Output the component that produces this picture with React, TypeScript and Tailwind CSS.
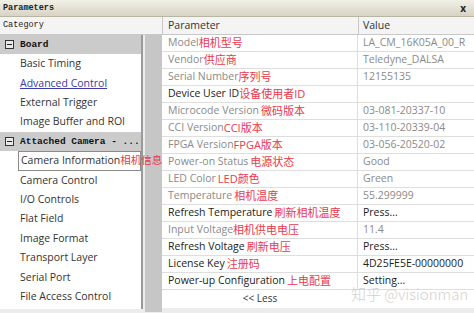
import React from "react";

const RED = "text-[#e8394d]";

type Row = { name: string; cn: string; value: string; ro: boolean; gap?: boolean };

const rows: Row[] = [
  { name: "Model", cn: "相机型号", value: "LA_CM_16K05A_00_R", ro: true },
  { name: "Vendor", cn: "供应商", value: "Teledyne_DALSA", ro: true },
  { name: "Serial Number", cn: "序列号", value: "12155135", ro: true },
  { name: "Device User ID", cn: "设备使用者ID", value: "", ro: false },
  { name: "Microcode Version", cn: "微码版本", value: "03-081-20337-10", ro: true, gap: true },
  { name: "CCI Version", cn: "CCI版本", value: "03-110-20339-04", ro: true },
  { name: "FPGA Version", cn: "FPGA版本", value: "03-056-20520-02", ro: true },
  { name: "Power-on Status", cn: "电源状态", value: "Good", ro: true, gap: true },
  { name: "LED Color", cn: "LED颜色", value: "Green", ro: true, gap: true },
  { name: "Temperature", cn: "相机温度", value: "55.299999", ro: true, gap: true },
  { name: "Refresh Temperature", cn: "刷新相机温度", value: "Press...", ro: false, gap: true },
  { name: "Input Voltage", cn: "相机供电电压", value: "11.4", ro: true },
  { name: "Refresh Voltage", cn: "刷新电压", value: "Press...", ro: false, gap: true },
  { name: "License Key", cn: "注册码", value: "4D25FE5E-00000000", ro: false, gap: true },
  { name: "Power-up Configuration", cn: "上电配置", value: "Setting...", ro: false, gap: true },
];

const boardItems = ["Basic Timing", "Advanced Control", "External Trigger", "Image Buffer and ROI"];
const camItems = [
  "Camera Control",
  "I/O Controls",
  "Flat Field",
  "Image Format",
  "Transport Layer",
  "Serial Port",
  "File Access Control",
];

const SANS = "font-['Open_Sans','Noto_Sans_CJK_SC',sans-serif]";
const MONO = "font-['Liberation_Mono',monospace]";

function MinusBox() {
  return (
    <span className="w-[9px] h-[9px] border border-[#333] flex items-center justify-center bg-[#e8e8e8] shrink-0">
      <span className="w-[5px] h-[1px] bg-[#222]" />
    </span>
  );
}

function Header({ label }: { label: string }) {
  return (
    <div className="h-[19.4px] bg-[#cbcbcb] flex items-center pl-[5px] gap-[6px]">
      <MinusBox />
      <span className={`${MONO} text-[9.5px] font-bold text-[#111] whitespace-pre`}>{label}</span>
    </div>
  );
}

function Item({ label, link }: { label: string; link?: boolean }) {
  return (
    <div
      className={`h-[19.4px] flex items-center pl-[20px] text-[10.5px] ${
        link ? "text-[#3a3aa8] underline" : "text-[#333]"
      }`}
    >
      {label}
    </div>
  );
}

export default function App() {
  return (
    <div className={`w-[474px] h-[313px] bg-[#ececec] relative overflow-hidden ${SANS}`}>
      {/* title bar */}
      <div className="h-[17px] flex items-center justify-between pl-[3px] pr-[8px] bg-gradient-to-b from-[#f2f0e6] to-[#d8d4c4] border-b border-[#b9b5a5]">
        <span className={`${MONO} text-[8.5px] font-bold text-[#222]`}>Parameters</span>
        <span className="text-[10px] font-bold text-[#222] leading-none">x</span>
      </div>
      {/* header row */}
      <div className="h-[18px] flex bg-[#f4f4f4] border-b border-[#c8c8c8]">
        <div className={`w-[162px] flex items-center pl-[3px] ${MONO} text-[8.5px] text-[#222]`}>Category</div>
        <div className="flex-1 flex border-l border-[#c8c8c8] text-[10.5px] text-[#333]">
          <div className="w-[196px] flex items-center pl-[5px] border-r border-[#c8c8c8]">Parameter</div>
          <div className="flex-1 flex items-center pl-[4px]">Value</div>
        </div>
      </div>
      {/* body */}
      <div className="flex h-[275px]">
        {/* left tree */}
        <div className="w-[143px] h-[274px] bg-white border-r-[2px] border-double border-[#9a9a9a] relative z-10">
          <Header label="Board" />
          {boardItems.map((b) => (
            <Item key={b} label={b} link={b === "Advanced Control"} />
          ))}
          <Header label="Attached Camera - ..." />
          <div className="h-[19.4px] flex items-center ml-[18px] pl-[2px] border border-[#8a8a8a] text-[10.5px] text-[#333] whitespace-nowrap overflow-visible">
            Camera Information<span className={`${RED} text-[10.5px]`}>相机信息</span>
          </div>
          {camItems.map((c) => (
            <Item key={c} label={c} />
          ))}
        </div>
        <div className="w-[2px]" />
        {/* gray gutter */}
        <div className="w-[17px] h-[277px] bg-[#c6c6c6]" />
        {/* table */}
        <div className="flex-1 bg-white h-[273px] text-[10.5px]">
          {rows.map((r) => (
            <div key={r.name} className="h-[17px] flex border-b border-[#dedede]">
              <div
                className={`w-[196px] flex items-center pl-[6px] border-r border-[#dedede] whitespace-nowrap ${
                  r.ro ? "text-[#8a8a8a]" : "text-[#222]"
                }`}
              >
                {r.name}
                {r.gap ? <span className="w-[2px]" /> : null}
                <span className={`${RED} text-[11px]`}>{r.cn}</span>
              </div>
              <div className={`flex-1 flex items-center pl-[5px] ${r.ro ? "text-[#8a8a8a]" : "text-[#222]"}`}>
                {r.value}
              </div>
            </div>
          ))}
          <div className="h-[16px] flex">
            <div className="w-[196px] flex items-center justify-center text-[10px] text-[#333]">&lt;&lt; Less</div>
          </div>
        </div>
      </div>
      {/* watermark */}
      <div className="absolute left-[351px] top-[283px] text-[15px] font-light text-[#c4c4c4]/80 font-['Noto_Sans_CJK_SC',sans-serif] whitespace-nowrap pointer-events-none">
        知乎 @visionman
      </div>
    </div>
  );
}
